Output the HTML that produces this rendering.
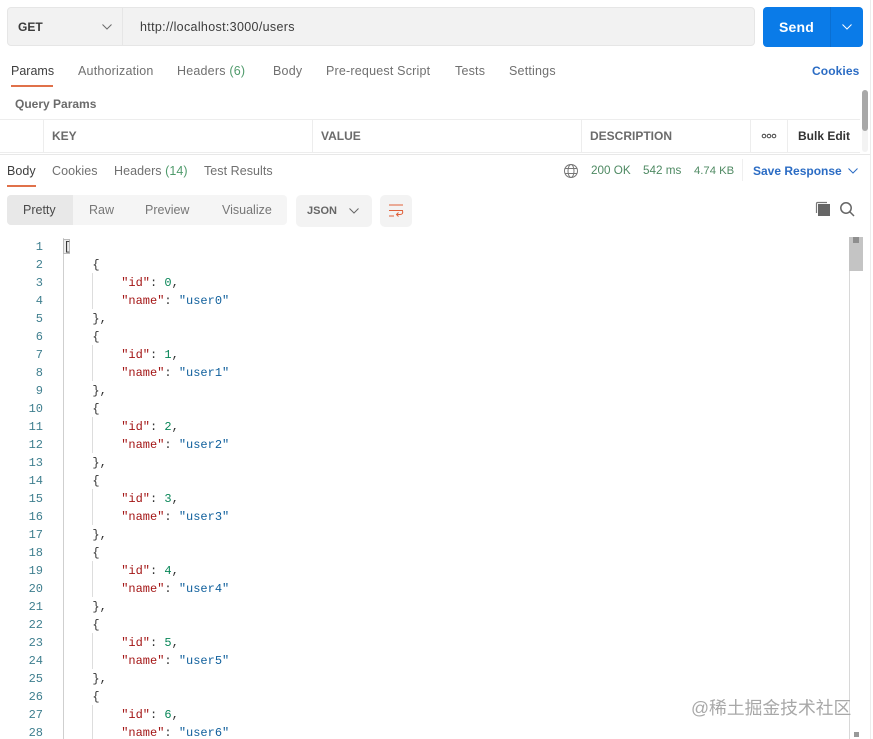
<!DOCTYPE html>
<html><head><meta charset="utf-8">
<style>
html,body{margin:0;padding:0;background:#fff;}
#p{position:relative;width:873px;height:739px;overflow:hidden;font-family:"Liberation Sans","Noto Sans CJK SC",sans-serif;font-size:12px;color:#6b6b6b;filter:blur(0.3px);}
.a{position:absolute;white-space:nowrap;line-height:16px;}
.t{letter-spacing:.2px;font-size:12.5px;color:#707070;}
.b{letter-spacing:.05px;font-size:12.5px;color:#707070;}
.r{position:absolute;}
.g{color:#4f9a6b;}
.m{position:absolute;white-space:pre;font-family:"Liberation Mono",monospace;font-size:12px;line-height:18px;left:63.6px;color:#333;margin-top:.5px;}
.n{position:absolute;left:13px;width:30px;text-align:right;font-family:"Liberation Mono",monospace;font-size:12px;line-height:18px;color:#3f7f8f;margin-top:.5px;}
.k{color:#a31515;}.s{color:#0f5f9c;}.d{color:#098658;}
</style></head><body><div id="p">
<div class="r" style="left:7px;top:7px;width:748px;height:39px;background:#f2f2f2;border:1px solid #e6e6e6;border-radius:4px;box-sizing:border-box;"></div>
<div class="r" style="left:122px;top:8px;width:1px;height:37px;background:#e6e6e6;"></div>
<div class="a" style="left:18px;top:19px;font-weight:bold;color:#3a3a3a;font-size:12px;">GET</div>
<svg class="r" style="left:100px;top:22px" width="14" height="10"><path d="M2.5 2.5L7 7L11.5 2.5" fill="none" stroke="#6b6b6b" stroke-width="1"/></svg>
<div class="a" style="left:140px;top:19px;color:#3c3c3c;font-size:12.5px;letter-spacing:.33px;">http://localhost:3000/users</div>
<div class="r" style="left:763px;top:7px;width:100px;height:40px;background:#0a7be8;border-radius:4px;"></div>
<div class="r" style="left:830px;top:7px;width:1px;height:40px;background:#0a6fd2;"></div>
<div class="a" style="left:779px;top:19px;color:#fff;font-weight:bold;font-size:14px;letter-spacing:.2px;">Send</div>
<svg class="r" style="left:840px;top:22px" width="14" height="10"><path d="M2.5 2.5L7 7L11.5 2.5" fill="none" stroke="#fff" stroke-width="1"/></svg>

<div class="a t" style="left:11px;top:63px;color:#3f3f3f;letter-spacing:0;">Params</div>
<div class="r" style="left:11px;top:85px;width:42px;height:2px;background:#e0714a;"></div>
<div class="a t" style="left:78px;top:63px;">Authorization</div>
<div class="a t" style="left:177px;top:63px;">Headers <span class="g">(6)</span></div>
<div class="a t" style="left:273px;top:63px;">Body</div>
<div class="a t" style="left:326px;top:63px;">Pre-request Script</div>
<div class="a t" style="left:455px;top:63px;">Tests</div>
<div class="a t" style="left:509px;top:63px;">Settings</div>
<div class="a" style="left:812px;top:63px;color:#2b6cc4;font-weight:bold;font-size:12px;letter-spacing:.1px;">Cookies</div>
<div class="a" style="left:15px;top:96px;font-weight:bold;font-size:12px;color:#6b6b6b;">Query Params</div>

<div class="r" style="left:0;top:119px;width:860px;height:1px;background:#ededed;"></div>
<div class="r" style="left:0;top:152px;width:860px;height:1px;background:#ededed;"></div>
<div class="r" style="left:0;top:154px;width:871px;height:1px;background:#e8e8e8;"></div>
<div class="r" style="left:43px;top:120px;width:1px;height:32px;background:#ededed;"></div>
<div class="r" style="left:312px;top:120px;width:1px;height:32px;background:#ededed;"></div>
<div class="r" style="left:581px;top:120px;width:1px;height:32px;background:#ededed;"></div>
<div class="r" style="left:750px;top:120px;width:1px;height:32px;background:#ededed;"></div>
<div class="r" style="left:787px;top:120px;width:1px;height:32px;background:#ededed;"></div>
<div class="a" style="left:52px;top:128px;font-weight:bold;font-size:12px;">KEY</div>
<div class="a" style="left:321px;top:128px;font-weight:bold;font-size:12px;">VALUE</div>
<div class="a" style="left:590px;top:128px;font-weight:bold;font-size:12px;">DESCRIPTION</div>
<svg class="r" style="left:761px;top:132px" width="16" height="8"><g fill="none" stroke="#444" stroke-width="1"><circle cx="3" cy="4" r="1.8"/><circle cx="8" cy="4" r="1.8"/><circle cx="13" cy="4" r="1.8"/></g></svg>
<div class="a" style="left:798px;top:128px;font-weight:bold;font-size:12px;color:#333;">Bulk Edit</div>
<div class="r" style="left:862px;top:90px;width:6px;height:62px;background:#f3f3f3;border-radius:3px;"></div>
<div class="r" style="left:862px;top:90px;width:6px;height:41px;background:#a8a8a8;border-radius:3px;"></div>
<div class="r" style="left:870px;top:0;width:1px;height:739px;background:#ececec;"></div>

<div class="a b" style="left:7px;top:163px;color:#3f3f3f;">Body</div>
<div class="r" style="left:7px;top:185px;width:29px;height:2px;background:#e0714a;"></div>
<div class="a b" style="left:52px;top:163px;">Cookies</div>
<div class="a b" style="left:114px;top:163px;">Headers <span class="g">(14)</span></div>
<div class="a b" style="left:204px;top:163px;">Test Results</div>
<svg class="r" style="left:563px;top:163px" width="16" height="16"><g fill="none" stroke="#777" stroke-width="1"><circle cx="8" cy="8" r="6.5"/><ellipse cx="8" cy="8" rx="3" ry="6.5"/><path d="M2 5.5H14M2 10.5H14"/></g></svg>
<div class="a" style="left:591px;top:163px;color:#4f8a63;font-size:11.7px;">200 OK</div>
<div class="a" style="left:643px;top:163px;color:#4f8a63;font-size:11.7px;">542 ms</div>
<div class="a" style="left:694px;top:163px;color:#4f8a63;font-size:11.3px;">4.74 KB</div>
<div class="r" style="left:742px;top:159px;width:1px;height:22px;background:#efefef;"></div>
<div class="a" style="left:753px;top:163px;color:#2b6cc4;font-weight:bold;font-size:12px;">Save Response</div>
<svg class="r" style="left:846px;top:166px" width="14" height="10"><path d="M2.5 2.5L7 7L11.5 2.5" fill="none" stroke="#2b6cc4" stroke-width="1"/></svg>

<div class="r" style="left:7px;top:195px;width:280px;height:30px;background:#f5f5f5;border-radius:4px;"></div>
<div class="r" style="left:7px;top:195px;width:66px;height:30px;background:#e8e8e8;border-radius:4px 0 0 4px;"></div>
<div class="a" style="left:23px;top:202px;color:#4a4a4a;font-size:12.5px;">Pretty</div>
<div class="a" style="left:89px;top:202px;font-size:12.5px;color:#777;">Raw</div>
<div class="a" style="left:145px;top:202px;font-size:12.5px;color:#777;">Preview</div>
<div class="a" style="left:222px;top:202px;font-size:12.5px;color:#777;">Visualize</div>
<div class="r" style="left:296px;top:195px;width:76px;height:32px;background:#f3f3f3;border-radius:5px;"></div>
<div class="a" style="left:307px;top:203px;font-size:11px;font-weight:bold;color:#666;">JSON</div>
<svg class="r" style="left:347px;top:206px" width="14" height="10"><path d="M2.5 2.5L7 7L11.5 2.5" fill="none" stroke="#666" stroke-width="1"/></svg>
<div class="r" style="left:380px;top:195px;width:32px;height:32px;background:#f3f3f3;border-radius:5px;"></div>
<svg class="r" style="left:388px;top:203px" width="16" height="16"><path d="M1 2H15M1 7.5H14.5Q15.5 11.5 12 11.5H8.5M10.5 9.5L8.5 11.5L10.5 13.5M1 13H6" fill="none" stroke="#e0603a" stroke-width="1"/></svg>
<svg class="r" style="left:815px;top:201px" width="16" height="16"><path d="M1.5 12V2.5Q1.5 1.5 2.5 1.5H12" fill="none" stroke="#777" stroke-width="1.2"/><rect x="3" y="3" width="12" height="12" fill="#666"/></svg>
<svg class="r" style="left:839px;top:201px" width="16" height="16"><circle cx="7" cy="7" r="5.2" fill="none" stroke="#666" stroke-width="1.5"/><path d="M11 11L15 15" stroke="#666" stroke-width="1.5"/></svg>

<div class="r" style="left:63px;top:238px;width:1px;height:501px;background:#cfcfcf;"></div>
<div class="r" style="left:63px;top:239px;width:7px;height:15px;background:#ececec;border:1px solid #bbb;box-sizing:border-box;"></div>
<div class="r" style="left:92px;top:273px;width:1px;height:36px;background:#ddd;"></div>
<div class="r" style="left:92px;top:345px;width:1px;height:36px;background:#ddd;"></div>
<div class="r" style="left:92px;top:417px;width:1px;height:36px;background:#ddd;"></div>
<div class="r" style="left:92px;top:489px;width:1px;height:36px;background:#ddd;"></div>
<div class="r" style="left:92px;top:561px;width:1px;height:36px;background:#ddd;"></div>
<div class="r" style="left:92px;top:633px;width:1px;height:36px;background:#ddd;"></div>
<div class="r" style="left:92px;top:705px;width:1px;height:34px;background:#ddd;"></div>

<div class="n" style="top:237px">1</div><div class="m" style="top:237px">[</div>
<div class="n" style="top:255px">2</div><div class="m" style="top:255px">    {</div>
<div class="n" style="top:273px">3</div><div class="m" style="top:273px">        <span class="k">"id"</span>: <span class="d">0</span>,</div>
<div class="n" style="top:291px">4</div><div class="m" style="top:291px">        <span class="k">"name"</span>: <span class="s">"user0"</span></div>
<div class="n" style="top:309px">5</div><div class="m" style="top:309px">    },</div>
<div class="n" style="top:327px">6</div><div class="m" style="top:327px">    {</div>
<div class="n" style="top:345px">7</div><div class="m" style="top:345px">        <span class="k">"id"</span>: <span class="d">1</span>,</div>
<div class="n" style="top:363px">8</div><div class="m" style="top:363px">        <span class="k">"name"</span>: <span class="s">"user1"</span></div>
<div class="n" style="top:381px">9</div><div class="m" style="top:381px">    },</div>
<div class="n" style="top:399px">10</div><div class="m" style="top:399px">    {</div>
<div class="n" style="top:417px">11</div><div class="m" style="top:417px">        <span class="k">"id"</span>: <span class="d">2</span>,</div>
<div class="n" style="top:435px">12</div><div class="m" style="top:435px">        <span class="k">"name"</span>: <span class="s">"user2"</span></div>
<div class="n" style="top:453px">13</div><div class="m" style="top:453px">    },</div>
<div class="n" style="top:471px">14</div><div class="m" style="top:471px">    {</div>
<div class="n" style="top:489px">15</div><div class="m" style="top:489px">        <span class="k">"id"</span>: <span class="d">3</span>,</div>
<div class="n" style="top:507px">16</div><div class="m" style="top:507px">        <span class="k">"name"</span>: <span class="s">"user3"</span></div>
<div class="n" style="top:525px">17</div><div class="m" style="top:525px">    },</div>
<div class="n" style="top:543px">18</div><div class="m" style="top:543px">    {</div>
<div class="n" style="top:561px">19</div><div class="m" style="top:561px">        <span class="k">"id"</span>: <span class="d">4</span>,</div>
<div class="n" style="top:579px">20</div><div class="m" style="top:579px">        <span class="k">"name"</span>: <span class="s">"user4"</span></div>
<div class="n" style="top:597px">21</div><div class="m" style="top:597px">    },</div>
<div class="n" style="top:615px">22</div><div class="m" style="top:615px">    {</div>
<div class="n" style="top:633px">23</div><div class="m" style="top:633px">        <span class="k">"id"</span>: <span class="d">5</span>,</div>
<div class="n" style="top:651px">24</div><div class="m" style="top:651px">        <span class="k">"name"</span>: <span class="s">"user5"</span></div>
<div class="n" style="top:669px">25</div><div class="m" style="top:669px">    },</div>
<div class="n" style="top:687px">26</div><div class="m" style="top:687px">    {</div>
<div class="n" style="top:705px">27</div><div class="m" style="top:705px">        <span class="k">"id"</span>: <span class="d">6</span>,</div>
<div class="n" style="top:723px">28</div><div class="m" style="top:723px">        <span class="k">"name"</span>: <span class="s">"user6"</span></div>

<div class="r" style="left:849px;top:237px;width:14px;height:34px;background:#c4c4c4;"></div>
<div class="r" style="left:853px;top:237px;width:6px;height:6px;background:#8e8e8e;"></div>
<div class="r" style="left:849px;top:271px;width:1px;height:468px;background:#d8d8d8;"></div>
<div class="r" style="left:854px;top:732px;width:5px;height:5px;background:#999;"></div>
<div class="a" style="left:691px;top:697px;font-size:17.8px;line-height:22px;color:#a8a8a8;">@稀土掘金技术社区</div>
</div></body></html>
